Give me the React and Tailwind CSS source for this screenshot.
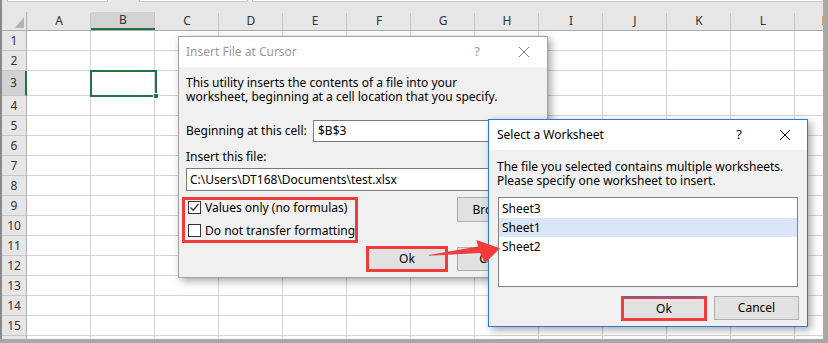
import React from 'react';

const cols = ['A', 'B', 'C', 'D', 'E', 'F', 'G', 'H', 'I', 'J', 'K', 'L', 'M'];
const rowHeights = [20, 20, 25, 20, 20, 20, 20, 20, 20, 20, 20, 20, 20, 20, 20, 20];

const font = { fontFamily: '"Noto Sans", "Open Sans", sans-serif' };

const CloseIcon = ({ className }) => (
  <svg width="12" height="12" viewBox="0 0 12 12" className={className}>
    <path d="M1 1 L11 11 M11 1 L1 11" stroke="currentColor" strokeWidth="1" fill="none" />
  </svg>
);

const Check = ({ checked }) => (
  <span className="w-[13px] h-[13px] border border-[#333] bg-white flex items-center justify-center shrink-0">
    {checked && (
      <svg width="11" height="11" viewBox="0 0 11 11">
        <path d="M1.5 5.5 L4.2 8.2 L9.5 2" stroke="#333" strokeWidth="1.3" fill="none" />
      </svg>
    )}
  </span>
);

const Sheet = () => (
  <div className="w-[823px] h-[339px] bg-white overflow-hidden flex flex-col border-l-2 border-[#8a8a8a]">
    {/* formula bar remains */}
    <div className="h-[12px] bg-[#e6e6e6] flex items-start shrink-0">
      <div className="ml-[5px] w-[101px] h-[2px] bg-white border-x border-b border-[#c8c8c8]" />
      <div className="ml-[31px] w-[109px] h-[2px] bg-white border-x border-b border-[#c8c8c8]" />
      <div className="ml-[4px] flex-1 h-[2px] bg-white border-l border-b border-[#c8c8c8]" />
    </div>
    {/* column headers */}
    <div className="h-[19px] flex bg-[#e6e6e6] border-b border-[#ababab] shrink-0">
      <div className="w-[25px] relative border-r border-[#ababab] shrink-0">
        <svg width="10" height="11" className="absolute left-[13px] top-[5px]">
          <polygon points="9,0 9,11 0,11" fill="#b4b4b4" />
        </svg>
      </div>
      {cols.map((c) => (
        <div
          key={c}
          className={`w-[64px] shrink-0 flex items-center justify-center text-[12px] leading-[16px] text-[#333] relative ${
            c === 'B' ? 'bg-[#d2d2d2] border-b-2 border-[#217346]' : ''
          }`}
          style={font}
        >
          {c}
          <span className="absolute right-0 top-[1px] bottom-0 w-px bg-[#c6c6c6]" />
        </div>
      ))}
    </div>
    {/* rows */}
    {rowHeights.map((h, i) => (
      <div key={i} className="flex shrink-0" style={{ height: h }}>
        <div
          className={`w-[25px] shrink-0 flex items-center justify-center text-[12px] leading-[16px] text-[#333] border-b border-[#c6c6c6] ${
            i === 2 ? 'bg-[#d2d2d2] border-r-2 border-r-[#217346]' : 'bg-[#e6e6e6] border-r border-r-[#ababab]'
          }`}
          style={font}
        >
          {i < 15 ? i + 1 : ''}
        </div>
        {cols.map((c) => (
          <div key={c} className="w-[64px] shrink-0 border-r border-b border-[#d4d4d4]" />
        ))}
      </div>
    ))}
  </div>
);

const Btn = ({ children, className = '' }) => (
  <div
    className={`bg-[#e1e1e1] border border-[#adadad] flex items-center justify-center text-[12px] leading-[16px] text-black ${className}`}
    style={font}
  >
    {children}
  </div>
);

const InsertDialog = () => (
  <div
    className="absolute left-[178px] top-[36px] w-[370px] h-[242px] bg-[#f0f0f0] border border-[#a0a0a0] shadow-[3px_3px_8px_rgba(0,0,0,0.35)] flex flex-col"
    style={font}
  >
    <div className="h-[30px] bg-white flex items-center pl-[7px] pr-[17px] shrink-0">
      <span className="text-[12px] text-[#999]">Insert File at Cursor</span>
      <span className="ml-auto text-[13px] text-[#999] mr-[38px]">?</span>
      <CloseIcon className="text-[#777]" />
    </div>
    <div className="px-[7px] pt-[9px] flex flex-col text-[12px] text-black">
      <p className="leading-[14px]">
        This utility inserts the contents of a file into your
        <br />
        worksheet, beginning at a cell location that you specify.
      </p>
      <div className="flex items-center mt-[16px] h-[22px]">
        <span className="w-[127px] whitespace-nowrap">Beginning at this cell:</span>
        <div className="flex-1 h-[22px] bg-white border border-[#7a7a7a] flex items-center pl-[4px] mr-[1px]">
          $B$3
        </div>
      </div>
      <span className="mt-[7px] leading-[16px]">Insert this file:</span>
      <div className="mt-[3px] h-[23px] bg-white border border-[#7a7a7a] flex items-center pl-[3px] mr-[1px]">
        C:\Users\DT168\Documents\test.xlsx
      </div>
      <div className="flex mt-[6px]">
        <div className="w-[176px] h-[46px] -ml-[4px] border-[3px] border-[#f23c3c] flex flex-col pl-[3px] pt-[1px] gap-[10px]">
          <div className="flex items-center gap-[4px] h-[13px] whitespace-nowrap">
            <Check checked />
            <span className="leading-[13px]">Values only (no formulas)</span>
          </div>
          <div className="flex items-center gap-[4px] h-[13px] whitespace-nowrap">
            <Check />
            <span className="leading-[13px]">Do not transfer formatting</span>
          </div>
        </div>
        <Btn className="ml-auto w-[82px] h-[25px] mr-[1px]">Browse...</Btn>
      </div>
      <div className="flex justify-end mt-[3px] gap-[9px] mr-[1px]">
        <div className="w-[82px] h-[26px] border-[3px] border-[#f23c3c]">
          <Btn className="w-full h-full border-0">Ok</Btn>
        </div>
        <Btn className="w-[82px] h-[24px] mt-[1px]">Cancel</Btn>
      </div>
    </div>
  </div>
);

const WorksheetDialog = () => (
  <div
    className="absolute left-[488px] top-[119px] w-[320px] h-[208px] bg-[#f0f0f0] border border-[#2b79d6] shadow-[3px_3px_8px_rgba(0,0,0,0.35)] flex flex-col"
    style={font}
  >
    <div className="h-[30px] bg-white flex items-center pl-[8px] pr-[16px] shrink-0">
      <span className="text-[12px] text-black">Select a Worksheet</span>
      <span className="ml-auto text-[13px] text-black mr-[37px]">?</span>
      <CloseIcon className="text-black" />
    </div>
    <div className="px-[9px] pt-[10px] flex flex-col text-[12px] text-black">
      <p className="leading-[14px] -ml-[1px]">
        The file you selected contains multiple worksheets.
        <br />
        Please specify one worksheet to insert.
      </p>
      <div className="mt-[9px] h-[90px] bg-white border border-[#828282] flex flex-col pt-[1px] leading-[16px]">
        <div className="h-[19px] flex items-center pl-[3px]">Sheet3</div>
        <div className="h-[19px] flex items-center pl-[3px] bg-[#dae5f7]">Sheet1</div>
        <div className="h-[19px] flex items-center pl-[3px]">Sheet2</div>
      </div>
      <div className="flex justify-end mt-[9px] gap-[7px] mr-[-1px]">
        <div className="w-[86px] h-[25px] border-[3px] border-[#f23c3c] relative">
          <span className="absolute -top-[3px] left-0 right-0 h-px bg-[#2b79d6]" />
          <Btn className="w-full h-full border-0">Ok</Btn>
        </div>
        <Btn className="w-[85px] h-[24px]">Cancel</Btn>
      </div>
    </div>
  </div>
);

export default function App() {
  return (
    <div className="w-[828px] h-[343px] bg-[#a8a8a8] relative overflow-hidden">
      <Sheet />
      {/* selected cell B3 */}
      <div className="absolute left-[90px] top-[70px] w-[67px] h-[27px] border-2 border-[#217346]">
        <span className="absolute -right-[4px] -bottom-[4px] w-[6px] h-[6px] bg-[#217346] border border-white" />
      </div>
      <InsertDialog />
      <WorksheetDialog />
      <svg className="absolute left-[425px] top-[236px]" width="80" height="32" viewBox="0 0 80 32">
        <polygon
          points="4,19 53,10.5 51.5,4 75,12.3 60,27 55,17 4,19.8"
          fill="#f23c3c"
        />
      </svg>
    </div>
  );
}
